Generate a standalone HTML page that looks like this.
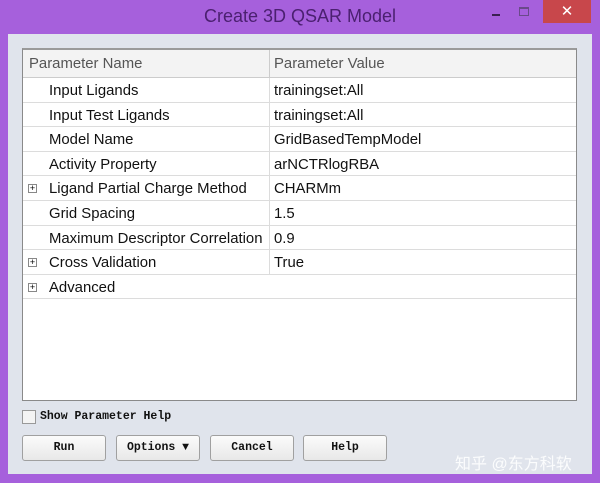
<!DOCTYPE html>
<html><head><style>
*{margin:0;padding:0;box-sizing:border-box}
body{width:600px;height:483px;background:#a660dc;position:relative;overflow:hidden;font-family:"Liberation Sans","Noto Sans CJK SC",sans-serif}
.title{position:absolute;left:0;width:600px;top:6px;text-align:center;font-size:18px;color:#4b2070}
.close{position:absolute;left:543px;top:0;width:48px;height:23px;background:#c8474b;color:#fff;text-align:center;font-size:15px;line-height:23px}
.min{position:absolute;left:492px;top:14px;width:8px;height:2px;background:#3a2050}
.max{position:absolute;left:519px;top:7px;width:10px;height:9px;border:1px solid #6a4a8a;border-top-width:2px}
.client{position:absolute;left:8px;top:34px;width:584px;height:440px;background:#e0e4ec}
.tbl{position:absolute;left:22px;top:48px;width:555px;height:353px;background:#fff;border:1px solid #8a8a8a;border-top:2px solid #9a9a9a}
.row{position:absolute;left:0;width:553px;height:24.6px;border-bottom:1px solid #dcdcdc;font-size:14.9px;color:#111;line-height:26px}
.hdr{top:0;height:28px;background:#f3f3f3;color:#555;line-height:29px;border-bottom:1px solid #ccc}
.n{position:absolute;left:26px}
.hdr .n{left:6px}
.v{position:absolute;left:246px;border-left:1px solid #dcdcdc;padding-left:4px;height:100%}
.hdr .v{border-left:1px solid #ccc}
.p{position:absolute;left:5px;top:8px;width:9px;height:9px;border:1px solid #888;font-size:9px;line-height:7px;text-align:center;color:#000}
.mono{font-family:"Liberation Mono","Noto Sans CJK SC",monospace;font-size:11.5px;font-weight:bold}
.btn{position:absolute;top:435px;width:84px;height:26px;border:1px solid #a0a0a0;border-radius:3px;background:linear-gradient(#fbfbfb,#e8e8e8);text-align:center;line-height:24px;color:#111}
.cb{position:absolute;left:22px;top:410px;width:14px;height:14px;border:1px solid #999;background:#f4f4f4}
.wm{position:absolute;left:455px;top:450px;font-size:16px;color:#fff;opacity:.9}
</style></head><body>
<div class="title">Create 3D QSAR Model</div>
<div class="min"></div><div class="max"></div>
<div class="close">✕</div>
<div class="client"></div>
<div class="tbl">
<div class="row hdr"><span class="n">Parameter Name</span><span class="v">Parameter Value</span></div>
<div class="row" style="top:28px"><span class="n">Input Ligands</span><span class="v">trainingset:All</span></div>
<div class="row" style="top:52.6px"><span class="n">Input Test Ligands</span><span class="v">trainingset:All</span></div>
<div class="row" style="top:77.2px"><span class="n">Model Name</span><span class="v">GridBasedTempModel</span></div>
<div class="row" style="top:101.8px"><span class="n">Activity Property</span><span class="v">arNCTRlogRBA</span></div>
<div class="row" style="top:126.4px"><span class="p">+</span><span class="n">Ligand Partial Charge Method</span><span class="v">CHARMm</span></div>
<div class="row" style="top:151px"><span class="n">Grid Spacing</span><span class="v">1.5</span></div>
<div class="row" style="top:175.6px"><span class="n">Maximum Descriptor Correlation</span><span class="v">0.9</span></div>
<div class="row" style="top:200.2px"><span class="p">+</span><span class="n">Cross Validation</span><span class="v">True</span></div>
<div class="row" style="top:224.8px"><span class="p">+</span><span class="n">Advanced</span></div>
</div>
<div class="cb"></div>
<div class="mono" style="position:absolute;left:40px;top:410px;color:#111">Show Parameter Help</div>
<div class="btn mono" style="left:22px">Run</div>
<div class="btn mono" style="left:116px">Options ▼</div>
<div class="btn mono" style="left:210px">Cancel</div>
<div class="btn mono" style="left:303px">Help</div>
<div class="wm">知乎 @东方科软</div>
</body></html>
